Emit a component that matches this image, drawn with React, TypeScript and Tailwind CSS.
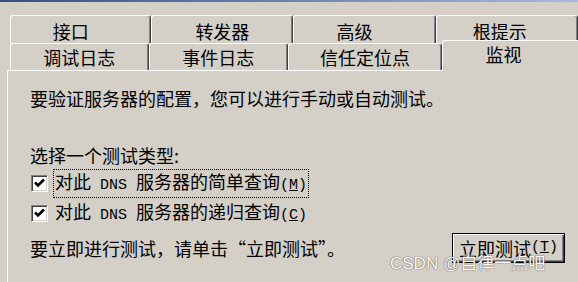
import type { ReactNode } from "react";

// Win2000-style property sheet: two rows of tabs, "监视" page selected.
const FACE = "bg-[#d4d0c8]";

function Tab({
  label,
  className = "",
}: {
  label: string;
  className?: string;
}) {
  return (
    <div
      className={`flex items-center justify-center h-full border-t border-l border-r border-t-white border-l-white border-r-[#404040] rounded-t-[3px] shadow-[inset_-1px_0_0_#808080] ${className}`}
    >
      {label}
    </div>
  );
}

function Mono({ children }: { children: ReactNode }) {
  return (
    <span className="font-['Liberation_Mono',monospace] text-[15px]">{children}</span>
  );
}

function CheckBox() {
  return (
    <div className="w-[17px] h-[17px] shrink-0 bg-white border border-t-[#808080] border-l-[#808080] border-b-white border-r-white shadow-[inset_1px_1px_0_#404040,inset_-1px_-1px_0_#d4d0c8] flex items-center justify-center">
      <svg width="11" height="10" viewBox="0 0 11 10">
        <polyline
          points="1,4.5 4,7.5 10,1.5"
          fill="none"
          stroke="#000"
          strokeWidth="2.6"
        />
      </svg>
    </div>
  );
}

function CheckRow({ focused, children }: { focused?: boolean; children: ReactNode }) {
  return (
    <div className="flex items-center h-[26px] pl-px">
      <CheckBox />
      <span
        className={`ml-[5px] px-[1px] leading-[22px] border border-dotted ${
          focused ? "border-black" : "border-transparent"
        }`}
      >
        {children}
      </span>
    </div>
  );
}

export default function App() {
  return (
    <div
      className={`relative w-[578px] h-[282px] overflow-hidden ${FACE} text-black text-[18px] font-['Noto_Sans_CJK_SC','Noto_Sans',sans-serif]`}
    >
      <div className="h-[2px] bg-gradient-to-r from-[#3a4e86] to-[#a8badb]" />

      {/* tab row 1 */}
      <div className="flex h-[28px] mt-[13px] pl-[10px]">
        <Tab label="接口" className="w-[143px] pr-[20px] pt-[3px]" />
        <Tab label="转发器" className="w-[144px] pt-[3px]" />
        <Tab label="高级" className="w-[144px] pr-[20px] pt-[3px]" />
        <Tab label="根提示" className="w-[144px] pr-[14px] pt-[3px]" />
      </div>

      {/* tab row 2, selected tab rises 3px */}
      <div className="flex items-end h-[30px] -mt-[3px] pl-[10px]">
        <Tab label="调试日志" className="w-[143px] h-[27px]! pt-[1px]" />
        <Tab label="事件日志" className="w-[144px] h-[27px]! pt-[1px]" />
        <Tab label="信任定位点" className="w-[159px] h-[27px]! pt-[1px]" />
        <div
          className={`relative z-10 w-[140px] h-[31px] -mb-px ${FACE} border-t border-l border-white rounded-tl-[3px] flex justify-center pr-[14px] leading-[26px]`}
        >
          监视
        </div>
      </div>

      {/* page */}
      <div className="ml-[7px] h-[220px] border-t border-l border-white pl-[22px] pr-[13px] pt-[14px]">
        <div className="h-[26px] leading-[26px]">
          要验证服务器的配置，您可以进行手动或自动测试。
        </div>
        <div className="h-[26px] leading-[26px] mt-[31px]">选择一个测试类型:</div>
        <div className="mt-[2px]">
          <CheckRow focused>
            对此<Mono> DNS </Mono>服务器的简单查询<Mono>(<u>M</u>)</Mono>
          </CheckRow>
        </div>
        <div className="mt-[4px]">
          <CheckRow>
            对此<Mono> DNS </Mono>服务器的递归查询<Mono>(<u>C</u>)</Mono>
          </CheckRow>
        </div>
        <div className="flex items-center h-[32px] mt-[6px]">
          <span className="leading-[26px]">要立即进行测试，请单击“立即测试”。</span>
          <button className="ml-auto w-[113px] h-[30px] border border-black shadow-[inset_1px_1px_0_#fff,inset_-1px_-1px_0_#404040,inset_-2px_-2px_0_#808080] flex items-center justify-center leading-[24px]">
            立即测试<Mono>(<u>T</u>)</Mono>
          </button>
        </div>
      </div>

      {/* CSDN watermark */}
      <div className="absolute left-[390px] top-[251px] text-[17px] text-white font-['Liberation_Sans','Noto_Sans_CJK_SC',sans-serif] [text-shadow:0_0_1px_#555,0_0_1px_#555]">
        CSDN @自律一点吧
      </div>
    </div>
  );
}
